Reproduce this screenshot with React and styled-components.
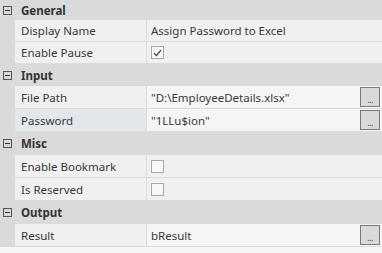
import React from "react";
import styled, { createGlobalStyle } from "styled-components";

const Global = createGlobalStyle`
  html, body {
    margin: 0;
    padding: 0;
    background: #f4f4f4;
  }
  * {
    box-sizing: border-box;
  }
`;

const Grid = styled.div`
  width: 382px;
  height: 253px;
  overflow: hidden;
  background: #f4f4f4;
  font-family: "Noto Sans", "Open Sans", sans-serif;
  font-size: 11.5px;
  color: #383838;
`;

const Header = styled.div`
  height: ${(p) => p.h}px;
  display: flex;
  align-items: center;
  background: #dadada;
  font-weight: bold;
  color: #333;
`;

const Toggle = styled.div`
  width: 9px;
  height: 9px;
  margin: 0 9px 0 3px;
  border: 1px solid #555;
  position: relative;
  &::after {
    content: "";
    position: absolute;
    left: 1px;
    right: 1px;
    top: 3px;
    height: 1px;
    background: #333;
  }
`;

const Row = styled.div`
  height: ${(p) => p.h}px;
  display: grid;
  grid-template-columns: 15px 132px 1fr;
  background: #dadada;
`;

const Name = styled.div`
  display: flex;
  align-items: center;
  padding-left: 6px;
  background: ${(p) => (p.selected ? "#e3e7ec" : "#f0f0f0")};
  border-bottom: 1px solid #dcdcdc;
  border-right: 1px solid #dcdcdc;
`;

const Value = styled.div`
  display: flex;
  align-items: center;
  padding-left: 4px;
  padding-right: 2px;
  background: ${(p) => (p.light ? "#f5f5f5" : "#f0f0f0")};
  border-bottom: 1px solid #dcdcdc;
  min-width: 0;
`;

const Text = styled.span`
  flex: 1;
  white-space: nowrap;
  overflow: hidden;
`;

const Check = styled.span`
  width: 13px;
  height: 13px;
  border: 1px solid #a8a8a8;
  background: #f8f8f8;
  display: flex;
  align-items: center;
  justify-content: center;
`;

const Dots = styled.span`
  width: 20px;
  height: 20px;
  border: 1px solid #7a7a7a;
  background: #dadada;
  display: flex;
  align-items: flex-end;
  justify-content: center;
  font-size: 9px;
  line-height: 13px;
  color: #444;
  letter-spacing: -0.5px;
`;

const Bottom = styled.div`
  height: 8px;
  background: #f6f6f6;
`;

const Tick = () => (
  <svg width="9" height="8" viewBox="0 0 9 8">
    <path d="M1 4.2 L3.4 6.6 L8 1.2" fill="none" stroke="#333" strokeWidth="1.2" />
  </svg>
);

const sections = [
  {
    title: "General",
    head: 20,
    h: 22,
    rows: [
      { name: "Display Name", text: "Assign Password to Excel" },
      { name: "Enable Pause", check: true },
    ],
  },
  {
    title: "Input",
    head: 22,
    h: 23,
    rows: [
      { name: "File Path", text: "\"D:\\EmployeeDetails.xlsx\"", dots: true },
      { name: "Password", text: "\"1LLu$ion\"", dots: true, selected: true },
    ],
  },
  {
    title: "Misc",
    head: 23,
    h: 23,
    rows: [
      { name: "Enable Bookmark", check: false },
      { name: "Is Reserved", check: false },
    ],
  },
  {
    title: "Output",
    head: 23,
    h: 23,
    rows: [{ name: "Result", text: "bResult", dots: true }],
  },
];

export default function App() {
  return (
    <Grid>
      <Global />
      {sections.map((s) => (
        <React.Fragment key={s.title}>
          <Header h={s.head}>
            <Toggle />
            {s.title}
          </Header>
          {s.rows.map((r) => (
            <Row key={r.name} h={s.h}>
              <span />
              <Name selected={r.selected}>{r.name}</Name>
              <Value light={r.dots}>
                {r.check !== undefined ? (
                  <Check>{r.check && <Tick />}</Check>
                ) : (
                  <Text>{r.text}</Text>
                )}
                {r.dots && <Dots>...</Dots>}
              </Value>
            </Row>
          ))}
        </React.Fragment>
      ))}
      <Bottom />
    </Grid>
  );
}
